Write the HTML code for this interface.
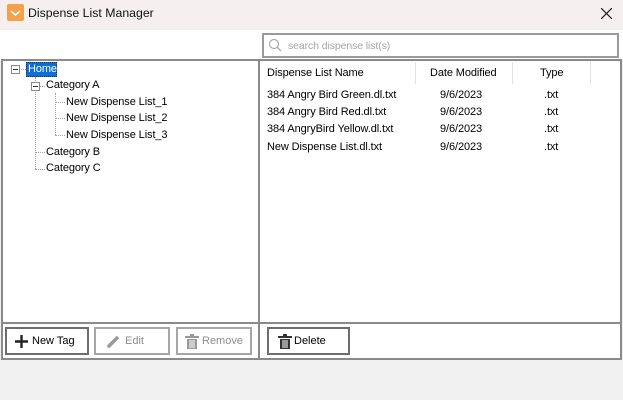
<!DOCTYPE html>
<html><head><style>
*{margin:0;padding:0;box-sizing:border-box}
body{width:623px;height:400px;background:#f0f0f0;font-family:"Liberation Sans",sans-serif;font-size:11px;color:#000;position:relative;overflow:hidden}
.abs{position:absolute}
.title{left:0;top:0;width:623px;height:30px;background:#f6efef}
.white{left:0;top:30px;width:623px;height:30px;background:#fff}
.panel{background:#fff;border:2px solid #8a8a8a}
.t{position:absolute;white-space:nowrap;font-size:11px;letter-spacing:-0.1px}
.btn{position:absolute;top:327px;height:28px;border:2px solid #6e6e6e;background:#fff;font-size:11px}
.btn span{position:absolute;top:6px}
.dis{border-color:#a6a6a6;color:#8e8e8e}
.dot{position:absolute;border-color:#a0a0a0;border-style:dotted;border-width:0}
</style></head><body>
<div class="abs title"></div>
<svg class="abs" style="left:7px;top:4px" width="17" height="17"><rect x="0" y="0" width="17" height="17" rx="2" fill="#f5a04a"/><path d="M4 7 L8.5 11 L13 7" stroke="#fff" stroke-width="1.6" fill="none"/></svg>
<div class="t" style="left:28px;top:6px;font-size:12.3px;color:#111;letter-spacing:0">Dispense List Manager</div>
<svg class="abs" style="left:601px;top:8px" width="11" height="11"><path d="M0 0L11 11M11 0L0 11" stroke="#222" stroke-width="1.2"/></svg>
<div class="abs white"></div>
<div class="abs" style="left:262px;top:33px;width:357px;height:25px;border:2px solid #9a9a9a;background:#fff"></div>
<svg class="abs" style="left:268px;top:38px" width="14" height="14"><circle cx="6" cy="6" r="4.5" stroke="#aaa" stroke-width="1.2" fill="none"/><path d="M9.3 9.3L13 13" stroke="#aaa" stroke-width="1.3"/></svg>
<div class="t" style="left:288px;top:40px;color:#a5a5a5;font-size:10.5px">search dispense list(s)</div>

<div class="abs panel" style="left:1px;top:59px;width:259px;height:266px"></div>
<div class="abs panel" style="left:258px;top:59px;width:364px;height:266px"></div>
<div class="abs panel" style="left:1px;top:322px;width:259px;height:38px"></div>
<div class="abs panel" style="left:258px;top:322px;width:364px;height:38px"></div>

<div class="abs" style="left:11px;top:65px;width:9px;height:9px;border:1px solid #8a8a8a;background:#fff"></div>
<div class="abs" style="left:13px;top:69px;width:5px;height:1px;background:#333"></div>
<div class="dot" style="left:21px;top:69px;width:5px;border-top-width:1px"></div>
<div class="abs" style="left:26px;top:62px;width:31px;height:15px;background:#0b6fd6;border:1px dotted #333"></div>
<div class="t" style="left:28px;top:63px;color:#fff">Home</div>
<div class="dot" style="left:35px;top:77px;height:92px;border-left-width:1px"></div>
<div class="abs" style="left:31px;top:82px;width:9px;height:9px;border:1px solid #8a8a8a;background:#fff"></div>
<div class="abs" style="left:33px;top:86px;width:5px;height:1px;background:#333"></div>
<div class="dot" style="left:40px;top:86px;width:5px;border-top-width:1px"></div>
<div class="t" style="left:46px;top:79px">Category A</div>
<div class="dot" style="left:55px;top:93px;height:42px;border-left-width:1px"></div>
<div class="dot" style="left:55px;top:102px;width:10px;border-top-width:1px"></div>
<div class="t" style="left:66px;top:96px">New Dispense List_1</div>
<div class="dot" style="left:55px;top:118px;width:10px;border-top-width:1px"></div>
<div class="t" style="left:66px;top:112px">New Dispense List_2</div>
<div class="dot" style="left:55px;top:135px;width:10px;border-top-width:1px"></div>
<div class="t" style="left:66px;top:129px">New Dispense List_3</div>
<div class="dot" style="left:35px;top:152px;width:10px;border-top-width:1px"></div>
<div class="t" style="left:46px;top:146px">Category B</div>
<div class="dot" style="left:35px;top:169px;width:10px;border-top-width:1px"></div>
<div class="t" style="left:46px;top:162px">Category C</div>

<div class="abs" style="left:415px;top:62px;width:1px;height:22px;background:#e3e3e3"></div>
<div class="abs" style="left:512px;top:62px;width:1px;height:22px;background:#e3e3e3"></div>
<div class="abs" style="left:590px;top:62px;width:1px;height:22px;background:#e3e3e3"></div>
<div class="t" style="left:267px;top:67px">Dispense List Name</div>
<div class="t" style="left:430px;top:67px">Date Modified</div>
<div class="t" style="left:540px;top:67px">Type</div>
<div class="t" style="left:267px;top:89px">384 Angry Bird Green.dl.txt</div>
<div class="t" style="left:267px;top:106px">384 Angry Bird Red.dl.txt</div>
<div class="t" style="left:267px;top:123px">384 AngryBird Yellow.dl.txt</div>
<div class="t" style="left:267px;top:141px">New Dispense List.dl.txt</div>
<div class="t" style="left:440px;top:89px">9/6/2023</div>
<div class="t" style="left:440px;top:106px">9/6/2023</div>
<div class="t" style="left:440px;top:123px">9/6/2023</div>
<div class="t" style="left:440px;top:141px">9/6/2023</div>
<div class="t" style="left:544px;top:89px">.txt</div>
<div class="t" style="left:544px;top:106px">.txt</div>
<div class="t" style="left:544px;top:123px">.txt</div>
<div class="t" style="left:544px;top:141px">.txt</div>

<div class="btn" style="left:5px;width:84px"><svg class="abs" style="left:8px;top:6px" width="13" height="13"><path d="M6.5 0V13M0 6.5H13" stroke="#222" stroke-width="2.4"/></svg><span style="left:25px">New Tag</span></div>
<div class="btn dis" style="left:94px;width:76px"><svg class="abs" style="left:10px;top:5px" width="15" height="15"><path d="M2 13L12 3" stroke="#999" stroke-width="3.5"/><path d="M1 14L2.5 11.5L3.5 12.5Z" fill="#999"/></svg><span style="left:29px">Edit</span></div>
<div class="btn dis" style="left:176px;width:76px"><svg class="abs" style="left:7px;top:5px" width="14" height="16"><rect x="0" y="2" width="14" height="2" fill="#999"/><rect x="5" y="0" width="4" height="2" fill="#999"/><rect x="2" y="5" width="10" height="10" fill="#999"/><path d="M5 6V14M7 6V14M9 6V14" stroke="#fff" stroke-width="1"/></svg><span style="left:24px">Remove</span></div>
<div class="btn" style="left:267px;width:83px"><svg class="abs" style="left:9px;top:5px" width="14" height="16"><rect x="0" y="2" width="14" height="2" fill="#333"/><rect x="5" y="0" width="4" height="2" fill="#333"/><rect x="2" y="5" width="10" height="10" fill="#333"/><path d="M5 6V14M7 6V14M9 6V14" stroke="#fff" stroke-width="1"/></svg><span style="left:25px">Delete</span></div>
</body></html>
